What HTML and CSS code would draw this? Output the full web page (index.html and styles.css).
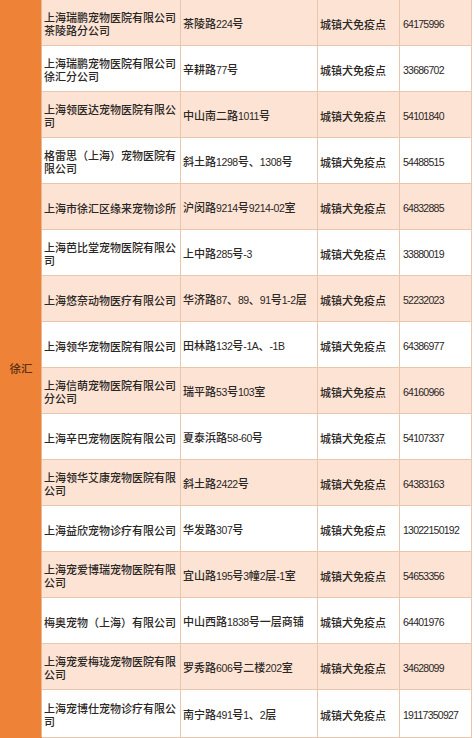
FILE: index.html
```html
<!DOCTYPE html>
<html lang="zh-CN">
<head>
<meta charset="utf-8">
<link rel="stylesheet" href="styles.css">
</head>
<body>
<table class="list">
  <colgroup>
    <col class="c-dist"><col class="c-name"><col class="c-addr"><col class="c-type"><col class="c-tel">
  </colgroup>
  <tbody>
    <tr class="odd"><td class="dist" rowspan="16">徐汇</td><td>上海瑞鹏宠物医院有限公司茶陵路分公司</td><td>茶陵路<span class="n">224</span>号</td><td>城镇犬免疫点</td><td class="tel">64175996</td></tr>
    <tr><td>上海瑞鹏宠物医院有限公司徐汇分公司</td><td>辛耕路<span class="n">77</span>号</td><td>城镇犬免疫点</td><td class="tel">33686702</td></tr>
    <tr class="odd"><td>上海领医达宠物医院有限公司</td><td>中山南二路<span class="n">1011</span>号</td><td>城镇犬免疫点</td><td class="tel">54101840</td></tr>
    <tr><td>格雷思（上海）宠物医院有限公司</td><td>斜土路<span class="n">1298</span>号、<span class="n">1308</span>号</td><td>城镇犬免疫点</td><td class="tel">54488515</td></tr>
    <tr class="odd"><td>上海市徐汇区缘来宠物诊所</td><td>沪闵路<span class="n">9214</span>号<span class="n">9214-02</span>室</td><td>城镇犬免疫点</td><td class="tel">64832885</td></tr>
    <tr><td>上海芭比堂宠物医院有限公司</td><td>上中路<span class="n">285</span>号<span class="n">-3</span></td><td>城镇犬免疫点</td><td class="tel">33880019</td></tr>
    <tr class="odd"><td>上海悠奈动物医疗有限公司</td><td>华济路<span class="n">87</span>、<span class="n">89</span>、<span class="n">91</span>号<span class="n">1-2</span>层</td><td>城镇犬免疫点</td><td class="tel">52232023</td></tr>
    <tr><td>上海领华宠物医院有限公司</td><td>田林路<span class="n">132</span>号<span class="n">-1A</span>、<span class="n">-1B</span></td><td>城镇犬免疫点</td><td class="tel">64386977</td></tr>
    <tr class="odd"><td>上海信萌宠物医院有限公司分公司</td><td>瑞平路<span class="n">53</span>号<span class="n">103</span>室</td><td>城镇犬免疫点</td><td class="tel">64160966</td></tr>
    <tr><td>上海辛巴宠物医院有限公司</td><td>夏泰浜路<span class="n">58-60</span>号</td><td>城镇犬免疫点</td><td class="tel">54107337</td></tr>
    <tr class="odd"><td>上海领华艾康宠物医院有限公司</td><td>斜土路<span class="n">2422</span>号</td><td>城镇犬免疫点</td><td class="tel">64383163</td></tr>
    <tr><td>上海益欣宠物诊疗有限公司</td><td>华发路<span class="n">307</span>号</td><td>城镇犬免疫点</td><td class="tel">13022150192</td></tr>
    <tr class="odd"><td>上海宠爱博瑞宠物医院有限公司</td><td>宜山路<span class="n">195</span>号<span class="n">3</span>幢<span class="n">2</span>层<span class="n">-1</span>室</td><td>城镇犬免疫点</td><td class="tel">54653356</td></tr>
    <tr><td>梅奥宠物（上海）有限公司</td><td>中山西路<span class="n">1838</span>号一层商铺</td><td>城镇犬免疫点</td><td class="tel">64401976</td></tr>
    <tr class="odd"><td>上海宠爱梅珑宠物医院有限公司</td><td>罗秀路<span class="n">606</span>号二楼<span class="n">202</span>室</td><td>城镇犬免疫点</td><td class="tel">34628099</td></tr>
    <tr class="last"><td>上海宠博仕宠物诊疗有限公司</td><td>南宁路<span class="n">491</span>号<span class="n">1</span>、<span class="n">2</span>层</td><td>城镇犬免疫点</td><td class="tel">19117350927</td></tr>
  </tbody>
</table>
</body>
</html>
```

FILE: styles.css
```css
html, body {
  margin: 0;
  padding: 0;
  background: #ffffff;
}
body {
  font-family: "Noto Sans CJK SC", sans-serif;
  font-size: 11px;
  font-weight: 500;
  color: #2b2725;
}
.list {
  border-collapse: collapse;
  table-layout: fixed;
  width: 471px;
  margin-top: -1px;
}
.c-dist { width: 41px; }
.c-name { width: 139px; }
.c-addr { width: 137px; }
.c-type { width: 82px; }
.c-tel { width: 72px; }
.list td {
  height: 42px;
  border: 1px solid #e9c7ae;
  padding: 3px 2px 0 2px;
  line-height: 13px;
  vertical-align: middle;
  word-break: break-all;
}
.list tr.last td {
  height: 44px;
}
.list tr.odd td {
  background: #fce3d4;
}
.list .n {
  font-family: "Liberation Sans", sans-serif;
  font-size: 10.5px;
  font-weight: 400;
  letter-spacing: -0.4px;
}
.list td.tel {
  font-family: "Liberation Sans", sans-serif;
  font-size: 10.5px;
  font-weight: 400;
  letter-spacing: -0.75px;
  padding-left: 3px;
}
.list td.dist {
  background: #ee8236;
  color: #5a2f12;
  text-align: center;
  font-size: 11.5px;
  border-color: #ee8236;
  border-right-color: #e7b895;
  padding: 0;
}
.list tr.odd td.dist {
  background: #ee8236;
}
```
